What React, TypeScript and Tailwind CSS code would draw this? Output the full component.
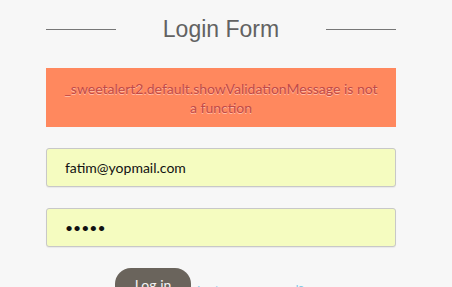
import React from "react";

export default function App() {
  return (
    <div className="w-[452px] h-[287px] overflow-hidden bg-[#f7f7f7]" style={{ fontFamily: "Lato, 'Liberation Sans', sans-serif" }}>
      <div className="w-[350px] ml-[46px] pt-[14px]">
        {/* titre avec lignes */}
        <div className="flex items-center justify-between h-[30px]">
          <div className="w-[70px] h-px bg-[#777]" />
          <h1 className="text-[23px] leading-[30px] text-[#626262]" style={{ fontFamily: "'Liberation Sans', Arial, sans-serif" }}>
            Login Form
          </h1>
          <div className="w-[70px] h-px bg-[#777]" />
        </div>

        {/* message d'erreur */}
        <div className="mt-[24px] h-[59px] bg-[#ff885e] flex items-center justify-center px-[16px] text-center">
          <p className="text-[14px] leading-[19px] text-[#c24a48] [text-shadow:0_1px_0_rgba(255,255,255,0.45)]">
            _sweetalert2.default.showValidationMessage is not a function
          </p>
        </div>

        <input
          readOnly
          value="fatim@yopmail.com"
          className="mt-[21px] block w-full h-[39px] bg-[#f5fcc0] border border-[#c8c8c8] rounded-[3px] pl-[18px] text-[14px] text-[#111] outline-none shadow-[0_1px_1px_rgba(0,0,0,0.06)]"
          style={{ fontFamily: "Lato, sans-serif" }}
        />
        <input
          readOnly
          type="password"
          value="12345"
          className="mt-[21px] block w-full h-[39px] bg-[#f5fcc0] border border-[#c8c8c8] rounded-[3px] pl-[18px] text-[14px] text-[#111] outline-none shadow-[0_1px_1px_rgba(0,0,0,0.06)]"
          style={{ fontFamily: "Lato, sans-serif" }}
        />

        <div className="mt-[21px] flex items-start ml-[69px]">
          <button className="w-[76px] h-[34px] rounded-[16px] bg-[#6a645c] text-[#f3f3f3] text-[14px] leading-[34px]">
            Log in
          </button>
          <a className="ml-[6px] mt-[12px] text-[12px] text-[#7cc8e6] leading-[20px]">Lost your password?</a>
        </div>
      </div>
    </div>
  );
}
